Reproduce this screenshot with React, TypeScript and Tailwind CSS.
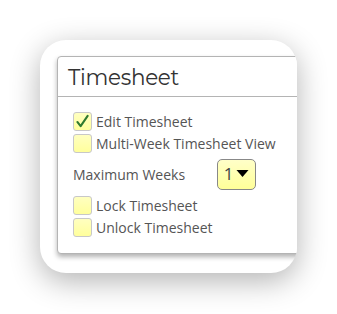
import React from 'react';

function Box({ checked = false }: { checked?: boolean }) {
  return (
    <span className="relative inline-flex h-[19px] w-[19px] shrink-0 items-center justify-center rounded-[3px] border border-[#c8c8c8] bg-gradient-to-b from-[#ffffc0] to-[#ffff9c]">
      {checked && (
        <svg viewBox="0 0 16 16" className="h-[15px] w-[15px]">
          <path d="M2.5 8.5 L6 13 L13.5 2" fill="none" stroke="#2f7a2f" strokeWidth="2.2" strokeLinecap="round" strokeLinejoin="round" />
        </svg>
      )}
    </span>
  );
}

function Row({ label, checked }: { label: string; checked?: boolean }) {
  return (
    <label className="flex items-center gap-[4px] h-[22px]">
      <Box checked={checked} />
      <span>{label}</span>
    </label>
  );
}

export default function App() {
  return (
    <div className="w-[337px] h-[314px] bg-white pt-[40px] pl-[40px]">
      <div className="w-[257px] h-[233px] overflow-hidden rounded-[26px] bg-white shadow-[0_8px_30px_rgba(0,0,0,0.3)] pt-[16px] pl-[17px]">
        <div className="w-[260px] h-[198px] rounded-l-[4px] border border-[#b4b4b4] bg-white shadow-[0_3px_5px_rgba(0,0,0,0.3)]">
          <div className="h-[40px] border-b border-[#b4b4b4] pl-[10px] pt-[4px] text-[21.5px] text-[#333] font-['Montserrat','DejaVu_Sans',sans-serif] tracking-[-0.3px]">
            Timesheet
          </div>
          <div className="pl-[15px] pt-[13px] text-[14px] text-[#555] font-['Open_Sans',sans-serif]">
            <Row label="Edit Timesheet" checked />
            <Row label="Multi-Week Timesheet View" />
            <div className="flex items-center h-[40px]">
              <span className="w-[144px]">Maximum Weeks</span>
              <span className="flex h-[31px] w-[39px] items-center justify-center gap-[3px] rounded-[5px] border border-[#888] bg-gradient-to-b from-[#ffffc8] to-[#ffff98] text-[17px] text-[#444]">
                1
                <svg viewBox="0 0 12 8" className="h-[8px] w-[13px]"><path d="M0 0 H12 L6 7 Z" fill="#000" /></svg>
              </span>
            </div>
            <Row label="Lock Timesheet" />
            <Row label="Unlock Timesheet" />
          </div>
        </div>
      </div>
    </div>
  );
}
